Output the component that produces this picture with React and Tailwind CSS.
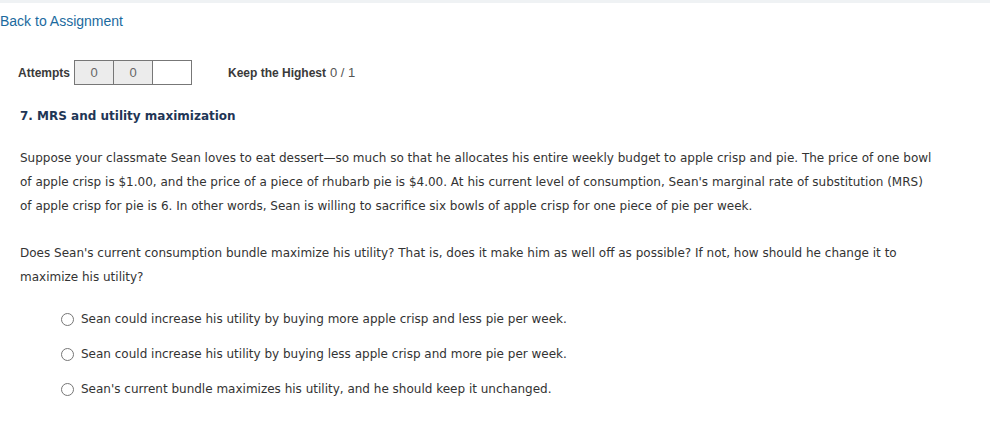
import React from 'react';

const options = [
  'Sean could increase his utility by buying more apple crisp and less pie per week.',
  'Sean could increase his utility by buying less apple crisp and more pie per week.',
  "Sean's current bundle maximizes his utility, and he should keep it unchanged.",
];

const verdana = { fontFamily: 'Verdana, "DejaVu Sans", sans-serif' };

const App = () => {
  return (
    <div className="w-[990px] h-[425px] bg-white overflow-hidden">
      <div className="h-[3px] bg-[#eff2f4]"></div>

      {/* back link */}
      <div className="pt-[5px] h-[35px]">
        <a className="text-[14px] leading-[16px] text-[#1b6a9e] font-['Liberation_Sans',Arial,sans-serif]">
          Back to Assignment
        </a>
      </div>

      {/* attempts row */}
      <div className="flex items-center pl-[18px] mt-[22px] font-['Liberation_Sans',Arial,sans-serif] text-[12px] text-[#3a3a3a]">
        <span className="font-bold mr-[4px]">Attempts</span>
        <div className="flex border border-[#777] h-[25px]">
          <div className="w-[39px] bg-[#ececec] border-r border-[#777] flex items-center justify-center text-[13px] text-[#666]">0</div>
          <div className="w-[39px] bg-[#ececec] border-r border-[#777] flex items-center justify-center text-[13px] text-[#666]">0</div>
          <div className="w-[38px] bg-white"></div>
        </div>
        <span className="ml-[36px] font-bold">Keep the Highest</span>
        <span className="ml-[4px] text-[13px] text-[#555]">0 / 1</span>
      </div>

      <div className="pl-[20px] w-[935px]" style={verdana}>
        <h2 className="mt-[23px] text-[12px] leading-[16px] font-bold text-[#1f3656]">
          7. MRS and utility maximization
        </h2>

        <p className="mt-[22px] text-[12px] leading-[24px] text-[#333]">
          Suppose your classmate Sean loves to eat dessert—so much so that he allocates his entire weekly budget to apple crisp and pie. The price of one bowl of apple crisp is $1.00, and the price of a piece of rhubarb pie is $4.00. At his current level of consumption, Sean's marginal rate of substitution (MRS) of apple crisp for pie is 6. In other words, Sean is willing to sacrifice six bowls of apple crisp for one piece of pie per week.
        </p>

        <p className="mt-[23px] text-[12px] leading-[24px] text-[#333]">
          Does Sean's current consumption bundle maximize his utility? That is, does it make him as well off as possible? If not, how should he change it to maximize his utility?
        </p>

        <div className="mt-[18px] pl-[41px] flex flex-col gap-[11px]">
          {options.map((opt) => (
            <label key={opt} className="flex items-center h-[24px] text-[12px] text-[#333]">
              <span className="w-[13px] h-[13px] rounded-full border border-[#767676] bg-white mr-[7px]"></span>
              {opt}
            </label>
          ))}
        </div>
      </div>
    </div>
  );
};

export default App;
